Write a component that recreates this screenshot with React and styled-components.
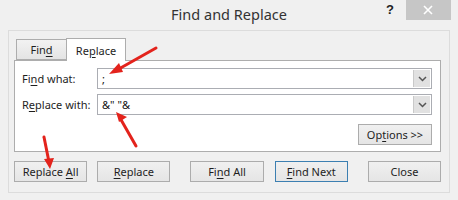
import styled, { createGlobalStyle } from "styled-components";

const Global = createGlobalStyle`
  body {
    margin: 0;
    background: #f0f0f0;
    font-family: "Segoe UI", "Noto Sans", "Open Sans", sans-serif;
  }
  u { text-decoration-thickness: 1px; text-underline-offset: 2px; }
`;

const App = () => {
  return (
    <>
      <Global />
      <Window>
        <TitleBar>
          <Title>Find and Replace</Title>
          <Help>?</Help>
          <CloseX>
            <svg width="10" height="10" viewBox="0 0 10 10">
              <path d="M1 1 L9 9 M9 1 L1 9" stroke="#fff" strokeWidth="1.6" />
            </svg>
          </CloseX>
        </TitleBar>
        <Client>
          <Tabs>
            <Tab>Fin<u>d</u></Tab>
            <Tab active>Re<u>p</u>lace</Tab>
          </Tabs>
          <Panel>
            <Row>
              <Label>Fi<u>n</u>d what:</Label>
              <Combo>
                <Value>;</Value>
                <Drop><Chevron /></Drop>
              </Combo>
            </Row>
            <Row>
              <Label>R<u>e</u>place with:</Label>
              <Combo>
                <Value>&amp;" "&amp;</Value>
                <Drop><Chevron /></Drop>
              </Combo>
            </Row>
            <OptionsRow>
              <Button>Op<u>t</u>ions &gt;&gt;</Button>
            </OptionsRow>
          </Panel>
          <Buttons>
            <Button>Replace&nbsp;<u>A</u>ll</Button>
            <Button gap={10}><u>R</u>eplace</Button>
            <Button gap={20}>Fi<u>n</u>d All</Button>
            <Button gap={11} primary><u>F</u>ind Next</Button>
            <Button gap={20}>Close</Button>
          </Buttons>
        </Client>
        <Arrows width="458" height="200" viewBox="0 0 458 200">
          <g stroke="#e3231c" strokeWidth="3" strokeLinecap="round" fill="none">
            <path d="M156 48 L117 70" />
            <path d="M44 137 L49 162" />
            <path d="M136 146 L120 118" />
          </g>
          <g fill="#e3231c">
            <path d="M109 74 L119 63 L123 72 Z" />
            <path d="M50 169 L44 159 L54 158 Z" />
            <path d="M116 112 L127 117 L119 122 Z" />
          </g>
        </Arrows>
      </Window>
    </>
  );
};

const Chevron = () => (
  <svg width="9" height="6" viewBox="0 0 9 6">
    <path d="M1 1 L4.5 4.5 L8 1" stroke="#555" strokeWidth="1.5" fill="none" />
  </svg>
);

export default App;

const Window = styled.div`
  position: relative;
  width: 458px;
  height: 200px;
  background: #f0f0f0;
  display: flex;
  flex-direction: column;
  overflow: hidden;
`;

const TitleBar = styled.div`
  height: 30px;
  display: flex;
  align-items: flex-start;
  position: relative;
`;

const Title = styled.div`
  position: absolute;
  left: 0;
  right: 0;
  top: 4px;
  text-align: center;
  font-size: 14.5px;
  color: #333;
`;

const Help = styled.div`
  margin-left: 386px;
  margin-top: 2px;
  font-family: "Liberation Sans", sans-serif;
  font-weight: bold;
  font-size: 13px;
  color: #222;
`;

const CloseX = styled.div`
  margin-left: 12px;
  width: 45px;
  height: 20px;
  background: #c6c6c6;
  display: flex;
  align-items: center;
  justify-content: center;
`;

const Client = styled.div`
  margin: 0 8px;
  height: 163px;
  box-sizing: border-box;
  border: 1px solid #dcdcdc;
  padding: 6px 8px 0 5px;
  display: flex;
  flex-direction: column;
`;

const Tabs = styled.div`
  display: flex;
  align-items: flex-end;
  height: 23px;
  padding-left: 2px;
`;

const Tab = styled.div`
  height: ${p => (p.active ? 23 : 21)}px;
  box-sizing: border-box;
  width: ${p => (p.active ? 60 : 51)}px;
  border: 1px solid #adadad;
  border-bottom: ${p => (p.active ? "none" : "1px solid #adadad")};
  background: ${p => (p.active ? "#fff" : "linear-gradient(#f2f2f2, #e4e4e4)")};
  font-size: 11px;
  color: #1e1e1e;
  display: flex;
  align-items: center;
  justify-content: center;
  margin-bottom: ${p => (p.active ? -1 : 0)}px;
  position: relative;
  z-index: ${p => (p.active ? 1 : 0)};
  margin-left: ${p => (p.active ? -1 : 0)}px;
`;

const Panel = styled.div`
  height: 92px;
  box-sizing: border-box;
  background: #fff;
  border: 1px solid #adadad;
  padding: 7px 8px 0 7px;
  display: flex;
  flex-direction: column;
  gap: 5px;
`;

const Row = styled.div`
  display: flex;
  align-items: center;
`;

const Label = styled.div`
  width: 75px;
  font-size: 11px;
  color: #1e1e1e;
`;

const Combo = styled.div`
  flex: 1;
  height: 19px;
  border: 1px solid #abadb3;
  display: flex;
  background: #fff;
`;

const Value = styled.div`
  flex: 1;
  font-size: 11px;
  padding-left: 4px;
  line-height: 19px;
  color: #111;
`;

const Drop = styled.div`
  width: 16px;
  margin: 1px;
  background: #e1e1e1;
  border-left: 1px solid #c9c9c9;
  display: flex;
  align-items: center;
  justify-content: center;
`;

const OptionsRow = styled.div`
  display: flex;
  justify-content: flex-end;
  margin-top: 4px;
`;

const Button = styled.div`
  width: 74px;
  height: 21px;
  box-sizing: border-box;
  margin-left: ${p => p.gap || 0}px;
  border: 1px solid ${p => (p.primary ? "#3c7fb1" : "#acacac")};
  background: linear-gradient(#f0f0f0, #e5e5e5);
  font-size: 11px;
  color: #1e1e1e;
  display: flex;
  align-items: center;
  justify-content: center;
  white-space: nowrap;
`;

const Buttons = styled.div`
  display: flex;
  margin-top: 9px;
`;

const Arrows = styled.svg`
  position: absolute;
  left: 0;
  top: 0;
  pointer-events: none;
`;
